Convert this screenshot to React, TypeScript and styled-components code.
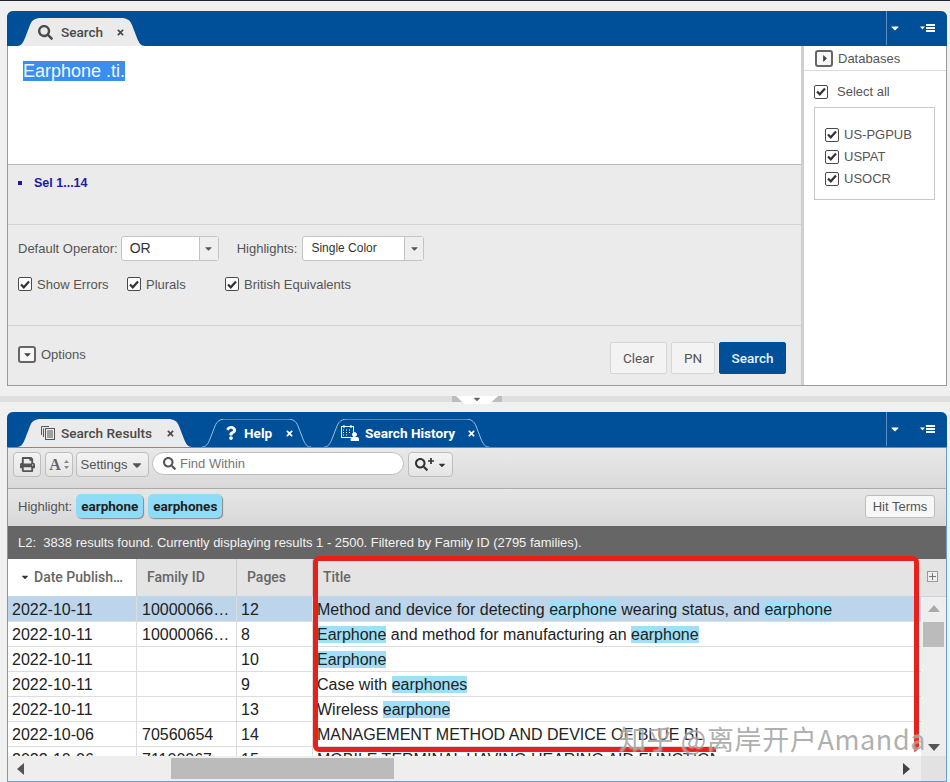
import styled, { createGlobalStyle } from "styled-components";
import { FaSearch, FaPrint, FaQuestion, FaTimes, FaCaretDown } from "react-icons/fa";

const GlobalStyle = createGlobalStyle`
  html, body {
    margin: 0;
    padding: 0;
    background: #f0f0f0;
    font-family: "Liberation Sans", Arial, sans-serif;
    color: #555;
  }
`;

const Page = styled.div`
  position: relative;
  width: 950px;
  height: 782px;
  overflow: hidden;
  border-top: 1px solid #20252c;
  box-sizing: border-box;
  padding-top: 10px;
`;

const Panel = styled.section<{ $h: number; $border: string }>`
  margin: 0 3px 0 7px;
  height: ${(p) => p.$h}px;
  box-sizing: border-box;
  border: 1px solid ${(p) => p.$border};
  border-top: 0;
  border-radius: 6px 6px 0 0;
  display: flex;
  flex-direction: column;
  background: #ebebeb;
`;

const TabBar = styled.div<{ $line?: boolean }>`
  height: ${(p) => (p.$line ? 36 : 35)}px;
  flex: none;
  margin: 0 -1px;
  background: #004f99;
  border-radius: 6px 6px 0 0;
  border-bottom: ${(p) => (p.$line ? "1px solid #4f97dc" : "0")};
  box-sizing: border-box;
  display: flex;
  align-items: flex-end;
  padding-left: 10px;
`;

const Tab = styled.div<{ $w: number; $active?: boolean; $ml?: number; $pl: number }>`
  position: relative;
  width: ${(p) => p.$w}px;
  height: 28px;
  margin-left: ${(p) => p.$ml ?? 0}px;
  padding-left: ${(p) => p.$pl}px;
  box-sizing: border-box;
  flex: none;
  display: flex;
  align-items: center;
  gap: 6px;
  font-family: Roboto, sans-serif;
  font-size: 13.6px;
  font-weight: ${(p) => (p.$active ? 500 : 700)};
  color: ${(p) => (p.$active ? "#4a4a4a" : "#fff")};

  svg.shape {
    position: absolute;
    left: 0;
    top: 0;
  }
  > *:not(.shape) {
    position: relative;
  }
`;

const TabLabel = styled.span<{ $ml?: number }>`
  margin-left: ${(p) => p.$ml ?? 0}px;
`;

const Close = styled(FaTimes)<{ $ml: number }>`
  width: 9px;
  height: 9px;
  margin-left: ${(p) => p.$ml}px;
`;

const TabActions = styled.div`
  margin-left: auto;
  width: 61px;
  height: 34px;
  align-self: flex-start;
  box-sizing: border-box;
  border-left: 1px solid #5b8fc4;
  display: flex;
  align-items: center;
  justify-content: space-between;
  padding: 0 11px 0 2px;
  color: #fff;
`;

const Caret = styled(FaCaretDown)`
  width: 12px;
  height: 12px;
`;

const TabShape = ({ w, active }: { w: number; active?: boolean }) => {
  const d = `M0 28 C4 28 6 25 8 20 L13 7 C15 2 18 0 24 0 H${w - 24} C${w - 18} 0 ${w - 15} 2 ${w - 13} 7 L${w - 8} 20 C${w - 6} 25 ${w - 4} 28 ${w} 28`;
  return (
    <svg className="shape" width={w} height={28} viewBox={`0 0 ${w} 28`}>
      {active ? (
        <path d={`${d} Z`} fill="#ebebeb" />
      ) : (
        <path d={d} fill="none" stroke="#9dbfdd" strokeWidth="1" />
      )}
    </svg>
  );
};

const ListMenuIcon = () => (
  <svg width="16" height="10" viewBox="0 0 16 10">
    <path d="M0 3.5h5L2.5 6.5z" fill="#fff" />
    <path d="M6 1h9v2H6zM6 4h9v2H6zM6 7h9v2H6z" fill="#fff" />
  </svg>
);

const PagesIcon = () => (
  <svg width="16" height="16" viewBox="0 0 16 16" fill="none" stroke="#555" strokeWidth="1">
    <path d="M1.5 10V1.5H9M3.5 12V3.5" />
    <rect x="5.5" y="3.5" width="9" height="11" fill="#ebebeb" />
    <path d="M7 6h6M7 8h6M7 10h6M7 12h6" />
  </svg>
);

const CalendarIcon = () => (
  <svg width="18" height="16" viewBox="0 0 18 16" fill="none" stroke="#fff" strokeWidth="1">
    <rect x="0.5" y="1.5" width="12" height="11" />
    <path d="M3 0v3M10 0v3M2 5h1M5 5h1M8 5h1M2 7.5h1M5 7.5h1M8 7.5h1M2 10h1M5 10h1" />
    <circle cx="13.5" cy="9.5" r="2" fill="#fff" />
    <path d="M10 15.5h8v-1.5c0-1-1-1.5-4-1.5s-4 .5-4 1.5z" fill="#fff" />
  </svg>
);

const SizeArrows = () => (
  <svg width="5" height="9" viewBox="0 0 5 9">
    <path d="M2.5 0L5 3H0zM2.5 9L0 6h5z" fill="#888" />
  </svg>
);

const PlusSvg = styled.svg`
  margin: -7px 0 0 -3px;
`;

const PlusMark = () => (
  <PlusSvg width="6" height="6" viewBox="0 0 7 7">
    <path d="M2.5 0h2v2.5H7v2H4.500V7h-2V4.500H0v-2h2.500z" fill="#333" />
  </PlusSvg>
);

const Work = styled.div`
  flex: 1;
  display: flex;
  min-height: 0;
`;

const LeftColumn = styled.div`
  width: 793px;
  flex: none;
  display: flex;
  flex-direction: column;
  border-right: 3px solid #cfcfcf;
`;

const Editor = styled.div`
  height: 119px;
  flex: none;
  box-sizing: border-box;
  background: #fff;
  border-bottom: 1px solid #bbb;
  padding: 15px 0 0 15px;
  font-size: 18px;
  line-height: 21px;
`;

const Selected = styled.span`
  background: #3a8ef0;
  color: #f2f7ff;
`;

const SelBlock = styled.div`
  height: 60px;
  flex: none;
  box-sizing: border-box;
  border-bottom: 1px solid #d2d2d2;
  padding: 11px 0 0 10px;
  display: flex;
  align-items: flex-start;
  gap: 12px;
  font-size: 12.5px;
  line-height: 14px;
  font-weight: 700;
  color: #1a1aa6;

  &::before {
    content: "";
    width: 4px;
    height: 4px;
    margin-top: 5px;
    background: #1a1aa6;
  }
`;

const OptionsBlock = styled.div`
  height: 101px;
  flex: none;
  box-sizing: border-box;
  border-bottom: 1px solid #d2d2d2;
  padding: 10px 0 0 10px;
`;

const SelectRow = styled.div`
  display: flex;
  align-items: center;
  height: 26px;
  font-size: 13px;
`;

const HighlightsLabel = styled.span`
  margin-left: 18px;
`;

const SelectBox = styled.div<{ $w: number; $fs: number; $ml: number }>`
  width: ${(p) => p.$w}px;
  height: 25px;
  margin-left: ${(p) => p.$ml}px;
  box-sizing: border-box;
  border: 1px solid #c4c4c4;
  border-radius: 3px;
  display: flex;
  background: #fff;
  color: #333;
  font-size: ${(p) => p.$fs}px;
  line-height: 23px;
  padding-left: 8px;
  justify-content: space-between;
`;

const SelectArrow = styled.div`
  width: 18px;
  border-left: 1px solid #c4c4c4;
  background: #efefef;
  display: flex;
  align-items: center;
  justify-content: center;
  color: #555;
`;

const CheckRow = styled.div`
  display: grid;
  grid-template-columns: 109px 98px auto;
  margin-top: 10px;
  height: 26px;
  align-items: center;
`;

const CheckLabel = styled.label<{ $gap?: number }>`
  display: flex;
  align-items: center;
  gap: ${(p) => p.$gap ?? 5}px;
  font-size: 13px;
  color: #555;
`;

const Box = styled.span`
  width: 14px;
  height: 14px;
  flex: none;
  box-sizing: border-box;
  border: 1.5px solid #4a4a4a;
  border-radius: 2px;
  background: #fff;
  display: flex;
  align-items: center;
  justify-content: center;
`;

const Check = ({ label, gap }: { label: string; gap?: number }) => (
  <CheckLabel $gap={gap}>
    <Box>
      <svg width="10" height="9" viewBox="0 0 10 9">
        <path d="M1 4.500l2.800 2.800L9 1.600" fill="none" stroke="#333" strokeWidth="2.200" />
      </svg>
    </Box>
    {label}
  </CheckLabel>
);

const Footer = styled.div`
  flex: 1;
  display: flex;
  align-items: center;
  justify-content: space-between;
  padding: 0 15px 0 10px;
`;

const ToggleLabel = styled.div`
  display: flex;
  align-items: center;
  gap: 5px;
  font-size: 13px;
  color: #555;
`;

const OptionsToggle = styled(ToggleLabel)`
  margin-bottom: 2px;
`;

const Toggle = styled.span`
  width: 18px;
  height: 17px;
  box-sizing: border-box;
  border: 2px solid #666;
  border-radius: 3px;
  background: #f7f7f7;
  display: flex;
  align-items: center;
  justify-content: center;
  color: #444;
`;

const CaretRight = styled(FaCaretDown)`
  transform: rotate(-90deg);
`;

const Buttons = styled.div`
  display: flex;
  gap: 4px;
  margin-top: 4px;
`;

const Button = styled.button<{ $w: number; $primary?: boolean }>`
  width: ${(p) => p.$w}px;
  height: 32px;
  padding: 0;
  box-sizing: border-box;
  border: 1px solid ${(p) => (p.$primary ? "#004f99" : "#d6d6d6")};
  border-radius: 2px;
  background: ${(p) => (p.$primary ? "#004f99" : "#f3f3f3")};
  color: ${(p) => (p.$primary ? "#e6f4ff" : "#555")};
  font-family: Roboto, sans-serif;
  font-weight: ${(p) => (p.$primary ? 500 : 400)};
  font-size: 13.5px;
`;

const DbColumn = styled.aside`
  flex: 1;
  background: #fff;
  display: flex;
  flex-direction: column;
`;

const DbHead = styled(ToggleLabel)`
  height: 25px;
  flex: none;
  box-sizing: border-box;
  border-bottom: 1px solid #ddd;
  padding-left: 11px;
`;

const DbBody = styled.div`
  padding: 13px 11px 0 10px;
`;

const DbList = styled.div`
  margin-top: 8px;
  height: 93px;
  box-sizing: border-box;
  border: 1px solid #c8c8c8;
  padding: 19px 0 0 10px;
  display: flex;
  flex-direction: column;
  gap: 7px;
`;

const Splitter = styled.div`
  position: relative;
  height: 6px;
  margin: 10px 0;
  background: #dfdfdc;

  &::before {
    content: "";
    position: absolute;
    left: 452px;
    top: 0;
    width: 50px;
    height: 6px;
    background: #bdbdbd;
  }

  &::after {
    content: "";
    position: absolute;
    left: 456px;
    top: 0;
    width: 42px;
    height: 8px;
    background: #fff;
    clip-path: polygon(0 0, 100% 0, 80% 100%, 20% 100%);
  }
`;

const SplitterCaret = styled(FaCaretDown)`
  position: absolute;
  left: 472px;
  top: -2px;
  width: 10px;
  height: 10px;
  color: #666;
  z-index: 1;
`;

const ToolBar = styled.div`
  height: 41px;
  flex: none;
  box-sizing: border-box;
  background: linear-gradient(#e9e9e9, #d9d9d9);
  border-bottom: 1px solid #aaa;
  display: flex;
  align-items: flex-start;
  padding: 4px 0 0 5px;
  gap: 3px;
`;

const ToolButton = styled.div<{ $w: number; $ml?: number }>`
  width: ${(p) => p.$w}px;
  height: 25px;
  margin-left: ${(p) => p.$ml ?? 0}px;
  box-sizing: border-box;
  border: 1px solid #bdbdbd;
  border-radius: 4px;
  background: linear-gradient(#f4f4f4, #e4e4e4);
  display: flex;
  align-items: center;
  justify-content: center;
  gap: 3px;
  color: #555;
  font-size: 13px;
`;

const FontGlyph = styled.span`
  font-family: "Liberation Serif", serif;
  font-weight: 700;
  font-size: 16px;
  color: #666;
`;

const FindWithin = styled.div`
  width: 252px;
  height: 23px;
  box-sizing: border-box;
  border: 1px solid #bdbdbd;
  border-radius: 12px;
  background: #fff;
  display: flex;
  align-items: center;
  gap: 4px;
  padding-left: 10px;
  color: #777;
  font-size: 13px;
`;

const HighlightBar = styled.div`
  height: 37px;
  flex: none;
  box-sizing: border-box;
  background: linear-gradient(#e6e6e6, #d8d8d8);
  display: flex;
  align-items: center;
  padding: 0 11px 3px 10px;
  font-size: 13px;
`;

const Chip = styled.span<{ $ml: number }>`
  margin-left: ${(p) => p.$ml}px;
  height: 24px;
  padding: 0 5px;
  border-radius: 5px;
  background: #8fdcf8;
  box-shadow: 1px 1px 1px #888;
  color: #222;
  font-weight: 700;
  font-family: Roboto, sans-serif;
  font-size: 13.5px;
  line-height: 24px;
`;

const HitTerms = styled(ToolButton)`
  margin-left: auto;
  height: 23px;
  border-radius: 3px;
  background: #f7f7f7;
`;

const StatusBar = styled.div`
  height: 33px;
  flex: none;
  background: #666;
  color: #f2f2f2;
  padding-left: 10px;
  font-size: 13px;
  letter-spacing: -0.02px;
  line-height: 34px;
  white-space: pre;
`;

const columns = "129px 100px 76px 1fr";

const HeaderRow = styled.div`
  height: 38px;
  flex: none;
  display: grid;
  grid-template-columns: ${columns} 28px;
  background: #e4e4e4;
  border-bottom: 1px solid #c5d5e4;
  box-sizing: border-box;
`;

const HeaderCell = styled.div<{ $sorted?: boolean; $center?: boolean }>`
  display: flex;
  align-items: center;
  justify-content: ${(p) => (p.$center ? "center" : "flex-start")};
  gap: 4px;
  padding-left: ${(p) => (p.$sorted ? 12 : p.$center ? 0 : 10)}px;
  padding-bottom: 2px;
  box-sizing: border-box;
  border-right: ${(p) => (p.$center ? "0" : "1px solid #ccc")};
  background: ${(p) => (p.$sorted ? "#fff" : "transparent")};
  font-family: Roboto, sans-serif;
  font-weight: 500;
  font-size: 14px;
  color: #666;
  white-space: nowrap;
`;

const PlusBox = styled.span`
  width: 11px;
  height: 11px;
  box-sizing: border-box;
  border: 1px solid #999;
  position: relative;
  background: #eee;

  &::before,
  &::after {
    content: "";
    position: absolute;
    background: #777;
  }
  &::before {
    left: 1px;
    right: 1px;
    top: 4px;
    height: 1px;
  }
  &::after {
    top: 1px;
    bottom: 1px;
    left: 4px;
    width: 1px;
  }
`;

const TableArea = styled.div`
  flex: 1;
  min-height: 0;
  display: flex;
`;

const RowsWrap = styled.div`
  flex: 1;
  overflow: hidden;
  background: #fff;
`;

const Row = styled.div<{ $selected?: boolean }>`
  height: 25px;
  box-sizing: border-box;
  display: grid;
  grid-template-columns: ${columns};
  border-bottom: 1px solid #ddd;
  background: ${(p) => (p.$selected ? "#bdd5eb" : "#fff")};
  color: #222;
  font-size: 16px;
  line-height: 26px;
  overflow: hidden;
`;

const Cell = styled.div<{ $pl?: number; $last?: boolean }>`
  padding-left: ${(p) => p.$pl ?? 4}px;
  border-right: ${(p) => (p.$last ? "0" : "1px solid #ddd")};
  white-space: nowrap;
  overflow: hidden;
`;

const Mark = styled.span`
  background: #9fe0f7;
`;

const VScroll = styled.div`
  width: 25px;
  flex: none;
  background: #eee;
  display: flex;
  flex-direction: column;
  align-items: center;
  position: relative;
  padding-top: 8px;
  box-sizing: border-box;
`;

const UpArrow = styled.span`
  width: 0;
  height: 0;
  border-left: 6px solid transparent;
  border-right: 6px solid transparent;
  border-bottom: 7px solid #aaa;
`;

const DownArrow = styled.span`
  width: 0;
  height: 0;
  border-left: 6px solid transparent;
  border-right: 6px solid transparent;
  border-top: 7px solid #555;
  margin-top: auto;
  margin-bottom: 5px;
`;

const VThumb = styled.div`
  width: 21px;
  height: 25px;
  margin-top: 10px;
  background: #bbb;
`;

const HScroll = styled.div`
  height: 25px;
  flex: none;
  display: flex;
  background: #eee;
  align-items: center;
  padding-left: 9px;
`;

const LeftArrow = styled.span`
  width: 0;
  height: 0;
  border-top: 6px solid transparent;
  border-bottom: 6px solid transparent;
  border-right: 7px solid #555;
`;

const RightArrow = styled.span`
  width: 0;
  height: 0;
  border-top: 6px solid transparent;
  border-bottom: 6px solid transparent;
  border-left: 7px solid #444;
  margin-left: auto;
  margin-right: 11px;
`;

const HThumb = styled.div`
  width: 223px;
  height: 21px;
  margin-left: 147px;
  background: #bbb;
`;

const HCorner = styled.div`
  width: 25px;
  height: 25px;
  background: #e2e2e2;
`;

// red annotation drawn on top of the screenshot
const RedFrame = styled.div`
  position: absolute;
  left: 313px;
  top: 555px;
  width: 606px;
  height: 196px;
  box-sizing: border-box;
  border: 5px solid #e8201a;
  border-radius: 6px;
`;

const Watermark = styled.div`
  position: absolute;
  left: 716px;
  top: 727px;
  width: 198px;
  height: 28px;
  background: #fff;
  white-space: nowrap;
`;

const WatermarkText = styled.span`
  position: absolute;
  left: -97px;
  top: -7px;
  font-family: "Noto Sans CJK SC", sans-serif;
  font-size: 27px;
  letter-spacing: 0.6px;
  line-height: 36px;
  color: rgba(130, 130, 130, 0.65);
  text-shadow: 0 0 2px #fff;
`;

const rows = [
  { date: "2022-10-11", id: "10000066…", pages: "12", selected: true, title: <>Method and device for detecting <Mark>earphone</Mark> wearing status, and <Mark>earphone</Mark></> },
  { date: "2022-10-11", id: "10000066…", pages: "8", title: <><Mark>Earphone</Mark> and method for manufacturing an <Mark>earphone</Mark></> },
  { date: "2022-10-11", id: "", pages: "10", title: <Mark>Earphone</Mark> },
  { date: "2022-10-11", id: "", pages: "9", title: <>Case with <Mark>earphones</Mark></> },
  { date: "2022-10-11", id: "", pages: "13", title: <>Wireless <Mark>earphone</Mark></> },
  { date: "2022-10-06", id: "70560654", pages: "14", title: <>MANAGEMENT METHOD AND DEVICE OF BLUE BL</> },
  { date: "2022-10-06", id: "71100067", pages: "15", title: <>MOBILE TERMINAL HAVING HEARING AID FUNCTION</> },
];

const App: React.FC = () => {
  return (
    <Page>
      <GlobalStyle />
      <Panel $h={375} $border="#9a9a9a">
        <TabBar>
          <Tab $w={128} $active $pl={21}>
            <TabShape w={128} active />
            <FaSearch size={15} />
            <TabLabel $ml={2}>Search</TabLabel>
            <Close $ml={7} />
          </Tab>
          <TabActions>
            <Caret />
            <ListMenuIcon />
          </TabActions>
        </TabBar>
        <Work>
          <LeftColumn>
            <Editor>
              <Selected>Earphone .ti.</Selected>
            </Editor>
            <SelBlock>Sel 1...14</SelBlock>
            <OptionsBlock>
              <SelectRow>
                Default Operator:
                <SelectBox $w={98} $fs={14} $ml={3}>
                  OR
                  <SelectArrow>
                    <FaCaretDown size={11} />
                  </SelectArrow>
                </SelectBox>
                <HighlightsLabel>Highlights:</HighlightsLabel>
                <SelectBox $w={122} $fs={12} $ml={5}>
                  Single Color
                  <SelectArrow>
                    <FaCaretDown size={11} />
                  </SelectArrow>
                </SelectBox>
              </SelectRow>
              <CheckRow>
                <Check label="Show Errors" />
                <Check label="Plurals" />
                <Check label="British Equivalents" />
              </CheckRow>
            </OptionsBlock>
            <Footer>
              <OptionsToggle>
                <Toggle>
                  <FaCaretDown size={11} />
                </Toggle>
                Options
              </OptionsToggle>
              <Buttons>
                <Button $w={57}>Clear</Button>
                <Button $w={44}>PN</Button>
                <Button $w={67} $primary>
                  Search
                </Button>
              </Buttons>
            </Footer>
          </LeftColumn>
          <DbColumn>
            <DbHead>
              <Toggle>
                <CaretRight size={11} />
              </Toggle>
              Databases
            </DbHead>
            <DbBody>
              <Check label="Select all" gap={9} />
              <DbList>
                <Check label="US-PGPUB" />
                <Check label="USPAT" />
                <Check label="USOCR" />
              </DbList>
            </DbBody>
          </DbColumn>
        </Work>
      </Panel>

      <Splitter>
        <SplitterCaret />
      </Splitter>

      <Panel $h={370} $border="#6f9cc6">
        <TabBar $line>
          <Tab $w={175} $active $pl={23}>
            <TabShape w={175} active />
            <PagesIcon />
            <TabLabel $ml={-1}>Search Results</TabLabel>
            <Close $ml={8} />
          </Tab>
          <Tab $w={109} $ml={10} $pl={22}>
            <TabShape w={109} />
            <FaQuestion size={14} />
            <TabLabel>Help</TabLabel>
            <Close $ml={7} />
          </Tab>
          <Tab $w={165} $ml={13} $pl={17}>
            <TabShape w={165} />
            <CalendarIcon />
            <TabLabel>Search History</TabLabel>
            <Close $ml={6} />
          </Tab>
          <TabActions>
            <Caret />
            <ListMenuIcon />
          </TabActions>
        </TabBar>
        <ToolBar>
          <ToolButton $w={28}>
            <FaPrint size={15} />
          </ToolButton>
          <ToolButton $w={28} $ml={1}>
            <FontGlyph>A</FontGlyph>
            <SizeArrows />
          </ToolButton>
          <ToolButton $w={73}>
            Settings
            <FaCaretDown size={14} />
          </ToolButton>
          <FindWithin>
            <FaSearch size={13} color="#555" />
            Find Within
          </FindWithin>
          <ToolButton $w={45} $ml={1}>
            <FaSearch size={13} color="#333" />
            <PlusMark />
            <FaCaretDown size={10} color="#333" />
          </ToolButton>
        </ToolBar>
        <HighlightBar>
          Highlight:
          <Chip $ml={4}>earphone</Chip>
          <Chip $ml={5}>earphones</Chip>
          <HitTerms $w={70}>Hit Terms</HitTerms>
        </HighlightBar>
        <StatusBar>L2:  3838 results found. Currently displaying results 1 - 2500. Filtered by Family ID (2795 families).</StatusBar>
        <HeaderRow>
          <HeaderCell $sorted>
            <FaCaretDown size={10} color="#333" />
            Date Publish…
          </HeaderCell>
          <HeaderCell>Family ID</HeaderCell>
          <HeaderCell>Pages</HeaderCell>
          <HeaderCell>Title</HeaderCell>
          <HeaderCell $center>
            <PlusBox />
          </HeaderCell>
        </HeaderRow>
        <TableArea>
          <RowsWrap>
            {rows.map((r, i) => (
              <Row key={i} $selected={r.selected}>
                <Cell>{r.date}</Cell>
                <Cell $pl={5}>{r.id}</Cell>
                <Cell>{r.pages}</Cell>
                <Cell $last>{r.title}</Cell>
              </Row>
            ))}
          </RowsWrap>
          <VScroll>
            <UpArrow />
            <VThumb />
            <DownArrow />
          </VScroll>
        </TableArea>
        <HScroll>
          <LeftArrow />
          <HThumb />
          <RightArrow />
          <HCorner />
        </HScroll>
      </Panel>

      <RedFrame />
      <Watermark>
        <WatermarkText>知乎 @离岸开户Amanda</WatermarkText>
      </Watermark>
    </Page>
  );
};

export default App;
